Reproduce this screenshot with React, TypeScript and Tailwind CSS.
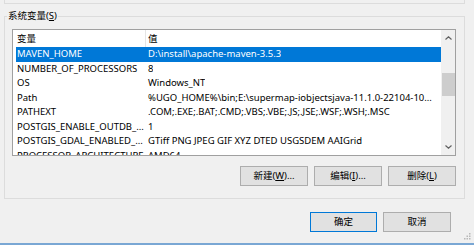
import React from "react";

const rows: [string, string][] = [
  ["MAVEN_HOME", "D:\\install\\apache-maven-3.5.3"],
  ["NUMBER_OF_PROCESSORS", "8"],
  ["OS", "Windows_NT"],
  ["Path", "%UGO_HOME%\\bin;E:\\supermap-iobjectsjava-11.1.0-22104-10..."],
  ["PATHEXT", ".COM;.EXE;.BAT;.CMD;.VBS;.VBE;.JS;.JSE;.WSF;.WSH;.MSC"],
  ["POSTGIS_ENABLE_OUTDB_...", "1"],
  ["POSTGIS_GDAL_ENABLED_...", "GTiff PNG JPEG GIF XYZ DTED USGSDEM AAIGrid"],
  ["PROCESSOR_ARCHITECTURE", "AMD64"],
];

function Btn({ label, primary }: { label: React.ReactNode; primary?: boolean }) {
  return (
    <button
      className={`h-[20px] flex items-center justify-center bg-[#e1e1e1] border ${
        primary ? "border-[#0078d7] w-[67px]" : "border-[#adadad] w-[68px]"
      }`}
    >
      {label}
    </button>
  );
}

function Chevron({ up }: { up?: boolean }) {
  return (
    <svg width="7" height="4" viewBox="0 0 7 4" className="block">
      <path
        d={up ? "M0.5 3.5 L3.5 0.8 L6.5 3.5" : "M0.5 0.5 L3.5 3.2 L6.5 0.5"}
        fill="none"
        stroke="#606060"
        strokeWidth="1.2"
      />
    </svg>
  );
}

export default function App() {
  return (
    <div
      className="relative w-[474px] h-[245px] bg-[#f0f0f0] text-black flex flex-col overflow-hidden text-[9.5px] leading-[14px]"
      style={{ fontFamily: '"Noto Sans", "Noto Sans CJK SC", sans-serif' }}
    >
      {/* bottom of the user variables box */}
      <div className="ml-[4px] w-[461px] h-[4px] border-x border-b border-[#dcdcdc]" />

      {/* system variables group */}
      <div className="relative ml-[4px] w-[461px] mt-[12px] h-[183px] border border-[#dcdcdc] pt-[12px] pl-[7px]">
        <span className="absolute left-[2px] top-[-8px] px-[1px] bg-[#f0f0f0]">
          系统变量(<span className="underline">S</span>)
        </span>

        <div className="w-[444px] h-[127px] border border-[#a0a0a0] bg-white flex overflow-hidden">
          <div className="w-[428px] flex flex-col overflow-hidden">
            {/* header */}
            <div className="h-[17px] shrink-0 flex items-center">
              <div className="w-[133px] pl-[4px] h-full flex items-center border-r border-[#e5e5e5]">变量</div>
              <div className="pl-[2px]">值</div>
            </div>
            {rows.map(([name, value], i) => (
              <div
                key={name}
                className={`ml-[3px] h-[14.5px] shrink-0 flex items-center whitespace-nowrap ${
                  i === 0 ? "bg-[#0078d7] text-white" : ""
                }`}
              >
                <div className="w-[130px] pl-[1px] overflow-hidden">{name}</div>
                <div className="pl-[2px] overflow-hidden">{value}</div>
              </div>
            ))}
          </div>

          {/* scrollbar */}
          <div className="w-[14px] bg-[#f0f0f0] flex flex-col items-center">
            <div className="h-[14px] flex items-center justify-center mt-[1px]">
              <Chevron up />
            </div>
            <div className="mt-[28px] w-[13px] h-[23px] bg-[#cdcdcd]" />
            <div className="mt-auto h-[14px] flex items-center justify-center mb-[1px]">
              <Chevron />
            </div>
          </div>
        </div>

        <div className="mt-[10px] w-[444px] flex justify-end gap-[6px]">
          <Btn label={<>新建(<span className="underline">W</span>)...</>} />
          <Btn label={<>编辑(<span className="underline">I</span>)...</>} />
          <Btn label={<>删除(<span className="underline">L</span>)</>} />
        </div>
      </div>

      {/* dialog buttons */}
      <div className="mt-[13px] flex justify-end gap-[6px] pr-[23px]">
        <Btn label="确定" primary />
        <Btn label="取消" />
      </div>

      <svg width="7" height="7" viewBox="0 0 7 7" className="absolute right-[3px] bottom-[5px]">
        <rect x="5" y="0" width="1.5" height="1.5" fill="#b8b8b8" />
        <rect x="2.5" y="2.5" width="1.5" height="1.5" fill="#b8b8b8" />
        <rect x="5" y="2.5" width="1.5" height="1.5" fill="#b8b8b8" />
        <rect x="0" y="5" width="1.5" height="1.5" fill="#b8b8b8" />
        <rect x="2.5" y="5" width="1.5" height="1.5" fill="#b8b8b8" />
        <rect x="5" y="5" width="1.5" height="1.5" fill="#b8b8b8" />
      </svg>

      <div className="mt-auto h-[2px] bg-[#7aa7d4]" />
    </div>
  );
}
